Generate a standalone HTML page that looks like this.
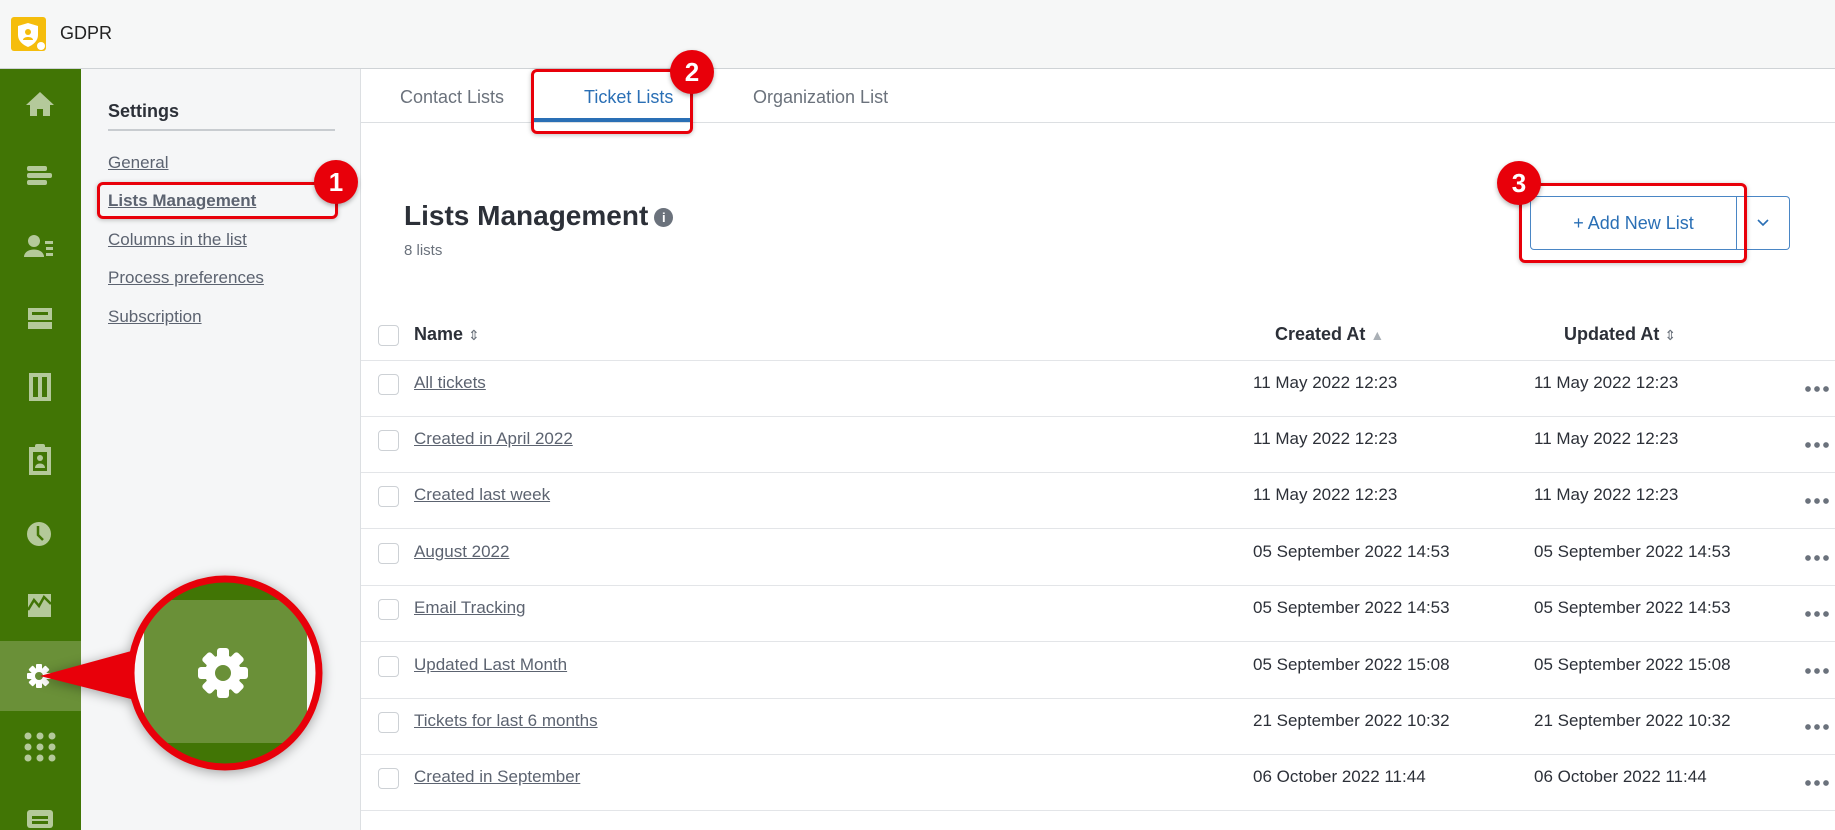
<!DOCTYPE html>
<html><head><meta charset="utf-8"><style>
*{box-sizing:border-box;margin:0;padding:0}
body{width:1835px;height:830px;overflow:hidden;position:relative;font-family:"Liberation Sans",sans-serif;background:#fff;color:#2c3038}
.abs{position:absolute}
#hdr{left:0;top:0;width:1835px;height:69px;background:#f6f7f7;border-bottom:1px solid #cfd3d6}
#side{left:0;top:69px;width:81px;height:761px;background:#417505}
#panel{left:81px;top:69px;width:280px;height:761px;background:#f5f6f7;border-right:1px solid #dcdfe2}
.lnk{position:absolute;left:108px;font-size:17px;color:#5c6370;text-decoration:underline}
.tab{position:absolute;top:87px;font-size:18px;color:#6b727c}
.row{position:absolute;left:361px;width:1474px;height:56px;border-bottom:1px solid #e3e5e8}
.cb{position:absolute;left:17px;width:21px;height:21px;border:1px solid #cdd1d5;border-radius:4px;background:#fff}
.nm{position:absolute;left:53px;font-size:17px;color:#5c6370;text-decoration:underline}
.d1{position:absolute;left:892px;font-size:17px;color:#2c3038}
.d2{position:absolute;left:1173px;font-size:17px;color:#2c3038}
.dots{position:absolute;left:1444px;width:24px;height:6px;background:radial-gradient(circle at 3px 3px,#6b727c 2.6px,transparent 3px) 0 0/9px 6px repeat-x}
.badge{position:absolute;width:44px;height:44px;border-radius:50%;background:#e8000a;color:#fff;font-weight:bold;font-size:26px;text-align:center;line-height:44px;box-shadow:0 2px 5px rgba(0,0,0,.3)}
.rbox{position:absolute;border:3px solid #e8000a;border-radius:6px;box-shadow:0 1px 5px rgba(0,0,0,.25)}
</style></head><body>
<div id="hdr" class="abs"></div>
<div class="abs" style="left:11px;top:17px;width:35px;height:34px;background:#f5bd0c;border-radius:3px"></div>
<svg class="abs" style="left:11px;top:17px" width="35" height="34"><path d="M17 6 L27 9 V18 C27 24 22 28 17 30 C12 28 7 24 7 18 V9 Z" fill="#fff"/><circle cx="17" cy="15" r="3" fill="#f5bd0c"/><path d="M12 23 C12 19 22 19 22 23 Z" fill="#f5bd0c"/><circle cx="30" cy="29" r="4" fill="#fff"/></svg>
<div class="abs" style="left:60px;top:23px;font-size:18px;color:#222">GDPR</div>

<div id="side" class="abs"></div>
<div class="abs" style="left:0;top:641px;width:81px;height:70px;background:#6a9038"></div>
<svg class="abs" style="left:0;top:69px" width="81" height="761" fill="#b4c99a">
<path d="M40 23 L26 36 H30 V47 H37 V40 H43 V47 H50 V36 H54 Z"/>
<rect x="27" y="97" width="20" height="5" rx="2"/><rect x="27" y="104" width="25" height="5" rx="2"/><rect x="27" y="111" width="20" height="5" rx="2"/>
<circle cx="34" cy="172" r="6"/><path d="M24 188 C24 178 44 178 44 188 Z"/><rect x="45" y="172" width="8" height="3"/><rect x="46" y="178" width="7" height="3"/><rect x="46" y="184" width="7" height="3"/>
<path d="M28 239 H52 V251 H28 Z M32 243 V246 H48 V243 Z M28 253 H52 V260 H28 Z" fill-rule="evenodd"/>
<path d="M29 304 H51 V332 H29 Z M33 308 V328 H38 V308 Z M42 308 V328 H47 V308 Z" fill-rule="evenodd"/>
<path d="M29 378 H51 V406 H29 Z M33 383 V402 H47 V383 Z" fill-rule="evenodd"/><circle cx="40" cy="389" r="3"/><path d="M35 399 C35 393 45 393 45 399 Z"/><rect x="35" y="375" width="10" height="5" rx="2"/>
<circle cx="39" cy="465" r="12"/><path d="M38 457 V466 L43 471" stroke="#417505" stroke-width="2.5" fill="none"/>
<path d="M28 525 H51 V548 H28 Z" /><path d="M28 541 L34 531 L39 537 L44 528 L51 535" stroke="#417505" stroke-width="2.5" fill="none"/>
<g fill="#fff"><rect x="36" y="595" width="6" height="24" rx="1"/><rect x="27" y="604" width="24" height="6" rx="1"/><rect x="36" y="595" width="6" height="24" rx="1" transform="rotate(45 39 607)"/><rect x="36" y="595" width="6" height="24" rx="1" transform="rotate(-45 39 607)"/><circle cx="39" cy="607" r="8"/></g><circle cx="39" cy="607" r="4" fill="#6a9038"/>
<g><circle cx="28" cy="667" r="3.5"/><circle cx="40" cy="667" r="3.5"/><circle cx="52" cy="667" r="3.5"/><circle cx="28" cy="678" r="3.5"/><circle cx="40" cy="678" r="3.5"/><circle cx="52" cy="678" r="3.5"/><circle cx="28" cy="689" r="3.5"/><circle cx="40" cy="689" r="3.5"/><circle cx="52" cy="689" r="3.5"/></g>
</svg>
<svg class="abs" style="left:0;top:808px" width="81" height="22"><rect x="27" y="2" width="26" height="18" rx="3" fill="#b4c99a"/><rect x="32" y="8" width="16" height="3" fill="#417505"/><rect x="32" y="13" width="16" height="3" fill="#417505"/></svg>

<div id="panel" class="abs"></div>
<div class="abs" style="left:108px;top:101px;font-size:18px;font-weight:bold;color:#2c3038">Settings</div>
<div class="abs" style="left:108px;top:129px;width:227px;height:2px;background:#c8ccd0"></div>
<div class="lnk" style="top:153px">General</div>
<div class="lnk" style="top:191px;font-weight:bold">Lists Management</div>
<div class="lnk" style="top:230px">Columns in the list</div>
<div class="lnk" style="top:268px">Process preferences</div>
<div class="lnk" style="top:307px">Subscription</div>

<div class="abs" style="left:361px;top:122px;width:1474px;height:1px;background:#dcdfe2"></div>
<div class="tab" style="left:400px">Contact Lists</div>
<div class="tab" style="left:584px;color:#2a6fb5">Ticket Lists</div>
<div class="tab" style="left:753px">Organization List</div>
<div class="abs" style="left:534px;top:118px;width:157px;height:4px;background:#2a6fb5"></div>

<div class="abs" style="left:404px;top:200px;font-size:28px;font-weight:bold;color:#2c3038;white-space:nowrap">Lists Management<span style="display:inline-block;vertical-align:3px;margin-left:6px;width:19px;height:19px;border-radius:50%;background:#6b727c;color:#fff;font-size:13px;text-align:center;line-height:19px">i</span></div>
<div class="abs" style="left:404px;top:242px;font-size:15px;color:#6b727c">8 lists</div>

<div class="abs" style="left:1530px;top:196px;width:207px;height:54px;border:1px solid #4a86c5;border-radius:4px 0 0 4px;color:#2a6fb5;font-size:18px;text-align:center;line-height:52px">+ Add New List</div>
<div class="abs" style="left:1736px;top:196px;width:54px;height:54px;border:1px solid #4a86c5;border-left:none;border-radius:0 4px 4px 0"></div>
<svg class="abs" style="left:1756px;top:217px" width="14" height="10"><path d="M2 3 L7 8 L12 3" stroke="#2a6fb5" stroke-width="1.6" fill="none"/></svg>

<div class="row" style="top:304px;height:57px">
<div class="cb" style="top:21px"></div>
<div class="abs" style="left:53px;top:20px;font-size:18px;font-weight:bold">Name <span style="color:#6b727c;font-weight:normal;font-size:14px">&#8661;</span></div>
<div class="abs" style="left:914px;top:20px;font-size:18px;font-weight:bold">Created At <span style="color:#aab0b6;font-size:14px">&#9650;</span></div>
<div class="abs" style="left:1203px;top:20px;font-size:18px;font-weight:bold">Updated At <span style="color:#6b727c;font-weight:normal;font-size:14px">&#8661;</span></div>
</div>
<div class="row" style="top:361px"><div class="cb" style="top:13px"></div><div class="nm" style="top:12px">All tickets</div><div class="d1" style="top:12px">11 May 2022 12:23</div><div class="d2" style="top:12px">11 May 2022 12:23</div><div class="dots" style="top:25px"></div></div>
<div class="row" style="top:417px"><div class="cb" style="top:13px"></div><div class="nm" style="top:12px">Created in April 2022</div><div class="d1" style="top:12px">11 May 2022 12:23</div><div class="d2" style="top:12px">11 May 2022 12:23</div><div class="dots" style="top:25px"></div></div>
<div class="row" style="top:473px"><div class="cb" style="top:13px"></div><div class="nm" style="top:12px">Created last week</div><div class="d1" style="top:12px">11 May 2022 12:23</div><div class="d2" style="top:12px">11 May 2022 12:23</div><div class="dots" style="top:25px"></div></div>
<div class="row" style="top:530px"><div class="cb" style="top:13px"></div><div class="nm" style="top:12px">August 2022</div><div class="d1" style="top:12px">05 September 2022 14:53</div><div class="d2" style="top:12px">05 September 2022 14:53</div><div class="dots" style="top:25px"></div></div>
<div class="row" style="top:586px"><div class="cb" style="top:13px"></div><div class="nm" style="top:12px">Email Tracking</div><div class="d1" style="top:12px">05 September 2022 14:53</div><div class="d2" style="top:12px">05 September 2022 14:53</div><div class="dots" style="top:25px"></div></div>
<div class="row" style="top:643px"><div class="cb" style="top:13px"></div><div class="nm" style="top:12px">Updated Last Month</div><div class="d1" style="top:12px">05 September 2022 15:08</div><div class="d2" style="top:12px">05 September 2022 15:08</div><div class="dots" style="top:25px"></div></div>
<div class="row" style="top:699px"><div class="cb" style="top:13px"></div><div class="nm" style="top:12px">Tickets for last 6 months</div><div class="d1" style="top:12px">21 September 2022 10:32</div><div class="d2" style="top:12px">21 September 2022 10:32</div><div class="dots" style="top:25px"></div></div>
<div class="row" style="top:755px"><div class="cb" style="top:13px"></div><div class="nm" style="top:12px">Created in September</div><div class="d1" style="top:12px">06 October 2022 11:44</div><div class="d2" style="top:12px">06 October 2022 11:44</div><div class="dots" style="top:25px"></div></div>

<!-- annotations -->
<div class="rbox" style="left:97px;top:182px;width:241px;height:37px"></div>
<div class="badge" style="left:314px;top:160px">1</div>
<div class="rbox" style="left:531px;top:69px;width:162px;height:65px"></div>
<div class="badge" style="left:670px;top:50px">2</div>
<div class="rbox" style="left:1519px;top:183px;width:228px;height:80px"></div>
<div class="badge" style="left:1497px;top:161px">3</div>

<svg class="abs" style="left:0;top:560px;filter:drop-shadow(0 2px 6px rgba(0,0,0,.35))" width="340" height="240">
<path d="M40 116 L135 90 L135 140 Z" fill="#e8000a"/>
<defs><clipPath id="c"><circle cx="225" cy="113" r="94"/></clipPath></defs>
<g clip-path="url(#c)">
<rect x="120" y="0" width="220" height="240" fill="#f5f6f7"/>
<rect x="144" y="0" width="163" height="240" fill="#417505"/>
<rect x="144" y="40" width="163" height="143" fill="#6a9038"/>
<g fill="#fff"><rect x="217" y="88" width="12" height="50" rx="3"/><rect x="198" y="107" width="50" height="12" rx="3"/><rect x="217" y="88" width="12" height="50" rx="3" transform="rotate(45 223 113)"/><rect x="217" y="88" width="12" height="50" rx="3" transform="rotate(-45 223 113)"/><circle cx="223" cy="113" r="18"/></g>
<circle cx="223" cy="113" r="8" fill="#6a9038"/>
</g>
<circle cx="225" cy="113" r="94" fill="none" stroke="#e8000a" stroke-width="7"/>
</svg>
</body></html>
